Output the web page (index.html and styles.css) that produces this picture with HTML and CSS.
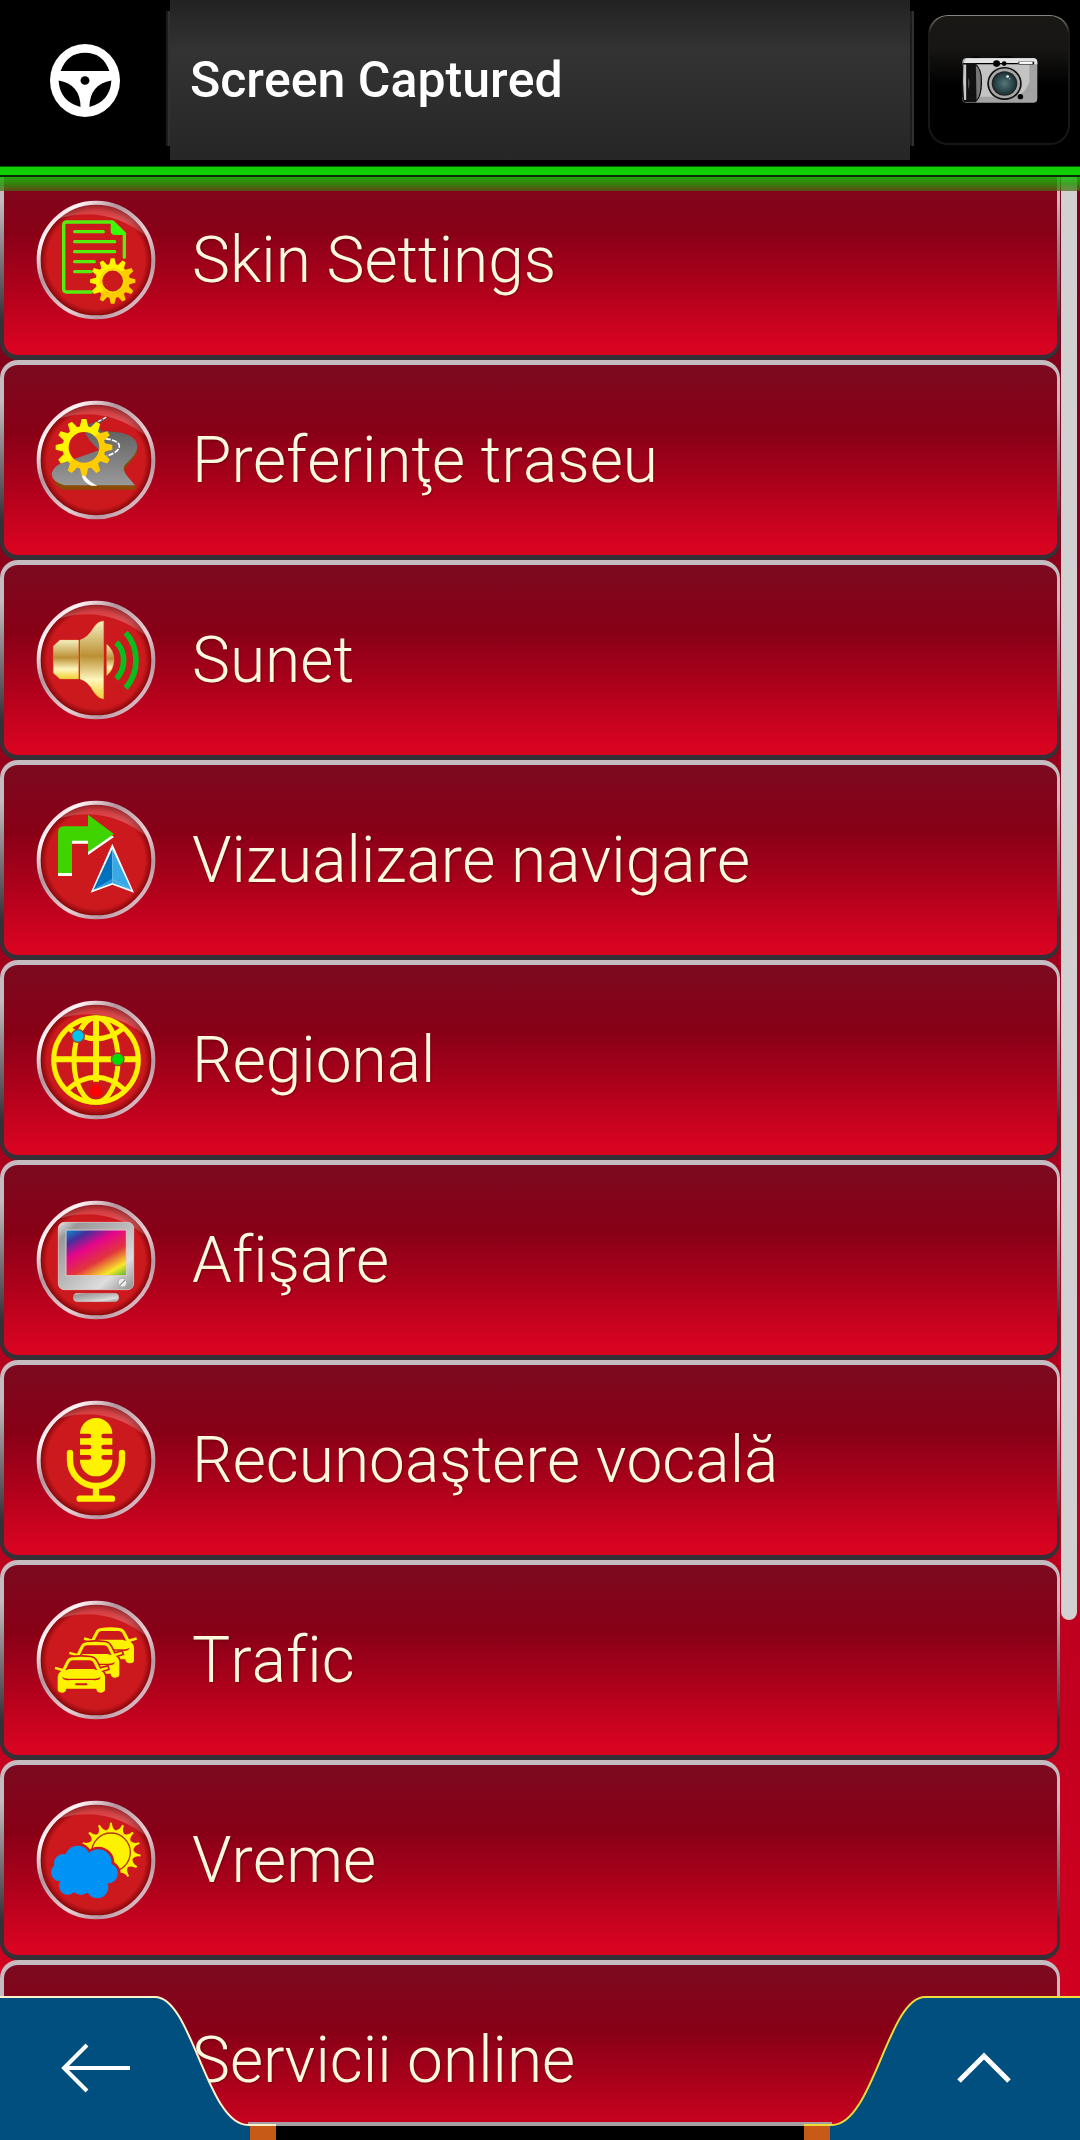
FILE: index.html
```html
<!DOCTYPE html>
<html lang="en">
<head>
<meta charset="utf-8">
<meta name="viewport" content="width=device-width, initial-scale=1">
<title>Screen Captured</title>
<link rel="stylesheet" href="styles.css">
</head>
<body>
<svg class="defs" aria-hidden="true">
  <defs>
    <linearGradient id="ring" x1="0" y1="0" x2="1" y2="1">
      <stop offset="0" stop-color="#c8a4ae"/><stop offset=".18" stop-color="#fff4f6"/><stop offset=".35" stop-color="#b4949e"/>
      <stop offset=".6" stop-color="#e8d0d6"/><stop offset=".76" stop-color="#b896a2"/><stop offset="1" stop-color="#fbe6ea"/>
    </linearGradient>
    <radialGradient id="dish">
      <stop offset=".86" stop-color="#cc191d"/><stop offset="1" stop-color="#7c0407"/>
    </radialGradient>
    <linearGradient id="gloss" x1="0" y1="0" x2="0" y2="1">
      <stop offset="0" stop-color="#fff" stop-opacity=".08"/><stop offset=".5" stop-color="#fff" stop-opacity=".24"/><stop offset="1" stop-color="#fff" stop-opacity=".14"/>
    </linearGradient>
    <linearGradient id="gold" x1="0" y1="0" x2="0" y2="1">
      <stop offset="0" stop-color="#f4efc0"/><stop offset=".45" stop-color="#bb9034"/><stop offset=".75" stop-color="#fff6bd"/><stop offset="1" stop-color="#f2cf32"/>
    </linearGradient>
    <linearGradient id="sunny" x1="0" y1="0" x2="1" y2="1">
      <stop offset=".48" stop-color="#fff500"/><stop offset=".52" stop-color="#ffcc00"/>
    </linearGradient>
    <linearGradient id="asphalt" x1="0" y1="0" x2="0" y2="1">
      <stop offset="0" stop-color="#555"/><stop offset="1" stop-color="#999"/>
    </linearGradient>
    <linearGradient id="silver" x1="0" y1="0" x2="1" y2="1">
      <stop offset="0" stop-color="#e6e6e6"/><stop offset=".14" stop-color="#999"/><stop offset=".5" stop-color="#bcbcbc"/><stop offset=".75" stop-color="#dedede"/><stop offset="1" stop-color="#8d8d8d"/>
    </linearGradient>
    <linearGradient id="spectrum" x1="0" y1="0" x2=".85" y2="1.15">
      <stop offset="0" stop-color="#0a8fd0"/><stop offset=".17" stop-color="#44309a"/><stop offset=".36" stop-color="#e5058b"/>
      <stop offset=".6" stop-color="#e2343c"/><stop offset=".82" stop-color="#f6ea2a"/><stop offset="1" stop-color="#35a83b"/>
    </linearGradient>
    <radialGradient id="lens"><stop offset="0" stop-color="#55777a"/><stop offset="1" stop-color="#1c3438"/></radialGradient>
    <path id="tooth" d="M-13 -60 L-7 -85 H7 L13 -60Z"/>
    <path id="ray" d="M-14 -66 Q-3 -72 -3 -89 H3 Q3 -72 14 -66Z"/>
    <mask id="gearMask" maskUnits="userSpaceOnUse" x="-90" y="-90" width="180" height="180">
      <circle r="55" fill="none" stroke="#fff" stroke-width="18"/>
      <g fill="#fff">
        <use href="#tooth"/><use href="#tooth" transform="rotate(30)"/><use href="#tooth" transform="rotate(60)"/><use href="#tooth" transform="rotate(90)"/>
        <use href="#tooth" transform="rotate(120)"/><use href="#tooth" transform="rotate(150)"/><use href="#tooth" transform="rotate(180)"/><use href="#tooth" transform="rotate(210)"/>
        <use href="#tooth" transform="rotate(240)"/><use href="#tooth" transform="rotate(270)"/><use href="#tooth" transform="rotate(300)"/><use href="#tooth" transform="rotate(330)"/>
      </g>
    </mask>
    <g id="gear"><rect x="-90" y="-90" width="180" height="180" fill="url(#sunny)" mask="url(#gearMask)"/></g>
    <g id="chip">
      <circle cx="180" cy="180" r="170" fill="url(#dish)"/>
      <path d="M60 58Q210 10 335 112A168 168 0 0 0 60 58Z" fill="url(#gloss)"/>
      <circle cx="180" cy="180" r="172" fill="none" stroke="url(#ring)" stroke-width="12"/>
    </g>
    <g id="car">
      <path fill="#fff200" stroke="#cc191d" stroke-width="10" paint-order="stroke" fill-rule="evenodd" d="M24 36L34 16Q40 3 52 2Q80-2 108 2Q119 3 126 16L136 36L158 30L160 37L140 43Q151 50 151 62V98Q151 108 139 108Q126 108 125 96H35Q34 108 21 108Q10 108 9 98V62Q9 50 20 43L0 37L2 30Z"/>
      <path fill="#cc191d" d="M32 41L44 17Q47 11 54 11H105Q112 11 116 17L128 41L116 37H44ZM22 61Q32 68 48 66H112Q128 68 138 61Q134 74 112 70H48Q28 74 22 61ZM62 80H98V86H62Z"/>
    </g>
    <g id="cloud">
      <circle cx="125" cy="175" r="38"/><circle cx="187" cy="188" r="40"/><circle cx="82" cy="190" r="28"/><circle cx="72" cy="217" r="27"/>
      <circle cx="216" cy="220" r="30"/><circle cx="95" cy="258" r="26"/><circle cx="135" cy="257" r="28"/><circle cx="184" cy="262" r="33"/><path d="M80 180H215V245L180 265H95Z"/>
    </g>
  </defs>
</svg>

<div class="app">
  <header class="topbar">
    <button class="drive" aria-label="Navigare">
      <svg class="wheel" viewBox="145 132 204 218" preserveAspectRatio="none">
        <ellipse cx="247" cy="241" rx="102" ry="109" fill="#fff"/>
        <path d="M176 213Q195 158 247 158Q300 158 318 213ZM170 241Q174 304 234 320Q233 252 170 241ZM324 241Q320 304 260 320Q261 252 324 241Z"/>
        <circle cx="247" cy="241" r="13"/>
      </svg>
    </button>
    <div class="titlebox"><h1 class="title">Screen Captured</h1></div>
    <div class="camcell">
      <button class="cambtn" aria-label="Captură">
        <svg class="camera" viewBox="1221 166 223 148" preserveAspectRatio="none">
          <rect x="1225" y="175" width="217" height="135" rx="12" fill="#a3a3a3"/>
          <path d="M1240 176H1432Q1442 178 1442 188V194H1228Q1230 178 1240 176Z" fill="#e4e4e4"/>
          <path d="M1268 194H1419V245Q1410 285 1370 292H1274Z" fill="#c4c4c4"/>
          <path d="M1250 175Q1262 166 1278 175ZM1320 174Q1348 163 1376 174ZM1236 190H1386V194H1236Z"/>
          <path d="M1226 190H1262Q1284 208 1282 250Q1282 292 1264 309H1230Q1222 300 1222 250Q1222 205 1226 190Z" fill="#111"/>
          <path d="M1228 195H1236V302H1230Q1225 250 1228 195Z" fill="#c8c8c8"/>
          <path d="M1264 197Q1280 212 1278 250Q1278 285 1266 303Z" fill="#777"/>
          <path d="M1242 235Q1249 252 1242 270Z" fill="#666"/>
          <circle cx="1324" cy="192" r="10"/><circle cx="1346" cy="192" r="7"/>
          <rect x="1387" y="186" width="46" height="9" fill="#222"/><rect x="1390" y="187" width="38" height="6" fill="#fff"/>
          <circle cx="1347" cy="252" r="50" fill="#111"/><circle cx="1347" cy="252" r="45" fill="#a8a8a8"/><circle cx="1347" cy="252" r="37" fill="#222"/>
          <circle cx="1347" cy="252" r="33" fill="url(#lens)"/><circle cx="1356" cy="231" r="4" fill="#fff"/><circle cx="1362" cy="238" r="2" fill="#ddd"/>
          <circle cx="1393" cy="292" r="8"/>
        </svg>
      </button>
    </div>
  </header>

  <main class="content">
    <ul class="menu">
      <li><a class="row" href="#skin">
        <svg class="icon" viewBox="0 0 360 360"><use href="#chip"/>
          <g fill="none" stroke="#55ef0c" stroke-width="10" stroke-linecap="round" stroke-linejoin="round">
            <path d="M166 276H92Q83 276 83 268V75Q83 66 93 66H230L265 100V172"/>
            <path d="M116 95H202M116 125H236M116 155H236M116 185H175M116 215H165"/></g>
          <path d="M224 64L269 105H238Q224 105 224 92Z" fill="#32ff08"/>
          <g transform="translate(230 243) scale(.8)"><use href="#gear"/><circle r="43" fill="none" stroke="#ffe100" stroke-width="8"/></g>
        </svg><span class="label">Skin Settings</span></a></li>
      <li><a class="row" href="#traseu">
        <svg class="icon" viewBox="0 0 360 360"><use href="#chip"/>
          <path fill="#8b4a05" d="M47 222L60 255L80 269H299V257Q262 222 266 208L304 160V138L220 100L155 110L190 150L120 190Z"/>
          <path fill="#444" d="M160 74L220 47L185 75L196 94L160 100Z"/>
          <path fill="url(#asphalt)" d="M155 74L216 51L185 75L196 94Q300 93 304 138Q305 160 272 190Q250 205 282 238L297 256H85Q48 245 47 222Q52 192 100 182L190 150Q150 115 148 96Z"/>
          <path fill="none" stroke="#fff" stroke-width="4" stroke-dasharray="12 4" d="M186 65L214 50"/>
          <path fill="none" stroke="#fff" stroke-width="5" stroke-dasharray="16 4" d="M208 116Q252 122 250 140Q248 156 212 168"/>
          <path fill="#fff" d="M137 225H146Q155 243 184 257H166Q140 246 137 225Z"/>
          <g transform="translate(144 142)"><use href="#gear"/></g>
        </svg><span class="label">Preferinţe traseu</span></a></li>
      <li><a class="row" href="#sunet">
        <svg class="icon" viewBox="0 0 360 360"><use href="#chip"/>
          <g fill="url(#gold)" stroke="#e8b050" stroke-width="1">
            <path d="M72 120H128V237H72L52 219V138Z"/>
            <path d="M132 120Q156 112 172 84Q185 63 203 63V297Q185 295 172 274Q156 244 132 237Z"/>
            <path d="M212 133Q234 150 234 180Q234 208 212 227Z"/></g>
          <path fill="none" stroke="#08bd1e" stroke-width="17" d="M241 127Q263 148 263 181Q263 214 241 236M269 98Q300 132 300 181Q300 230 269 264"/>
        </svg><span class="label">Sunet</span></a></li>
      <li><a class="row" href="#navigare">
        <svg class="icon" viewBox="0 0 360 360"><use href="#chip"/>
          <path transform="translate(0 9)" fill="#fff" d="M66 219V97Q66 79 84 79H156V44L234 102L156 156V122H108V219Z"/>
          <path fill="#3fd400" d="M66 219V97Q66 79 84 79H156V44L234 102L156 156V122H108V219Z"/>
          <path fill="#fff" d="M229 131L294 278L229 254L164 278Z"/>
          <path fill="#0071bd" d="M229 147V238L172 270Z"/><path fill="#38a9e4" d="M229 147V238L286 270Z"/>
          <path fill="#2a98dc" d="M229 236V249L172 270Z"/><path fill="#38a9e4" d="M229 238L286 270L229 249Z"/>
        </svg><span class="label">Vizualizare navigare</span></a></li>
      <li><a class="row" href="#regional">
        <svg class="icon" viewBox="0 0 360 360"><use href="#chip"/>
          <g fill="none" stroke="#fff200" stroke-width="15">
            <circle cx="180" cy="180" r="127"/><ellipse cx="180" cy="180" rx="66" ry="127"/>
            <path d="M180 52V245M52 178H308" stroke-width="18"/><path d="M97 84Q135 116 180 116Q225 116 263 84M93 270Q135 232 180 232Q225 232 267 270"/></g>
          <circle cx="126" cy="108" r="19" fill="#00c4ea" stroke="#a33b32" stroke-width="4"/>
          <circle cx="245" cy="178" r="19" fill="#00dc00" stroke="#a33b32" stroke-width="4"/>
          <circle cx="180" cy="272" r="18" fill="#f00"/>
        </svg><span class="label">Regional</span></a></li>
      <li><a class="row" href="#afisare">
        <svg class="icon" viewBox="0 0 360 360"><use href="#chip"/>
          <rect x="67" y="67" width="226" height="202" rx="18" fill="url(#silver)" stroke="#ddd" stroke-width="2"/>
          <rect x="90" y="90" width="181" height="137" fill="url(#spectrum)" stroke="#e4c8cc" stroke-width="3"/>
          <circle cx="259" cy="248" r="13" fill="#eee" stroke="#999" stroke-width="2"/><path d="M251 257L267 240" stroke="#999" stroke-width="4"/>
          <rect x="112" y="280" width="136" height="25" rx="12" fill="url(#silver)" stroke="#ccc"/>
        </svg><span class="label">Afişare</span></a></li>
      <li><a class="row" href="#voce">
        <svg class="icon" viewBox="0 0 360 360"><use href="#chip"/>
          <rect x="132" y="54" width="97" height="175" rx="48" fill="#fff200"/>
          <path fill="none" stroke="#cc191d" stroke-width="14" stroke-linecap="round" d="M125 108H159M203 108H236M125 141H159M203 141H236M125 172H159M203 172H236"/>
          <path fill="none" stroke="#fff200" stroke-width="19" stroke-linecap="round" d="M102 159V180A78 78 0 0 0 258 180V159M180 260V294M131 296H228"/>
        </svg><span class="label">Recunoaştere vocală</span></a></li>
      <li><a class="row" href="#trafic">
        <svg class="icon" viewBox="0 0 360 360"><use href="#chip"/>
          <use href="#car" x="143" y="82"/><use href="#car" x="99" y="125"/><use href="#car" x="56" y="170"/>
        </svg><span class="label">Trafic</span></a></li>
      <li><a class="row" href="#vreme">
        <svg class="icon" viewBox="0 0 360 360"><use href="#chip"/>
          <g transform="translate(225 157)" fill="#fff200">
            <circle r="68"/>
            <use href="#ray"/><use href="#ray" transform="rotate(24)"/><use href="#ray" transform="rotate(48)"/><use href="#ray" transform="rotate(72)"/><use href="#ray" transform="rotate(96)"/>
            <use href="#ray" transform="rotate(120)"/><use href="#ray" transform="rotate(144)"/><use href="#ray" transform="rotate(288)"/><use href="#ray" transform="rotate(312)"/><use href="#ray" transform="rotate(336)"/>
            <circle r="58" fill="none" stroke="#b5371c" stroke-width="4"/>
          </g>
          <use href="#cloud" fill="#cc191d" stroke="#cc191d" stroke-width="16"/><use href="#cloud" fill="#0092f5"/>
        </svg><span class="label">Vreme</span></a></li>
      <li><a class="row" href="#online">
        <svg class="icon" viewBox="0 0 360 360"><use href="#chip"/></svg><span class="label">Servicii online</span></a></li>
    </ul>
    <div class="track"><div class="thumb"></div></div>
  </main>

  <footer class="bottombar">
    <button class="tab" aria-label="Înapoi">
      <svg viewBox="0 0 276 144">
        <path fill="#004f7e" d="M0 1H155C192 1 207 129 248 129H250V144H0Z"/>
        <path fill="#c85a17" d="M250 129H276V144H250Z"/>
        <path fill="none" stroke="#fff3cc" stroke-width="2" d="M0 1H155C192 1 207 129 248 129H276"/>
        <path fill="none" stroke="#fff" stroke-width="4" d="M130 72H65M87 49L64 72L87 95"/>
      </svg>
    </button>
    <div class="strip"></div>
    <button class="tab" aria-label="Sus">
      <svg viewBox="0 0 276 144">
        <path fill="#004f7e" d="M276 1H121C84 1 69 129 28 129H26V144H276Z"/>
        <path fill="#c85a17" d="M0 129H26V144H0Z"/>
        <path fill="none" stroke="#efdc3c" stroke-width="2" d="M276 1H121C84 1 69 129 28 129H0"/>
        <path fill="none" stroke="#fff" stroke-width="5" d="M155 85L180 60L205 85"/>
      </svg>
    </button>
  </footer>
</div>
</body>
</html>
```
FILE: styles.css
```css
* { box-sizing: border-box; }

body {
  margin: 0;
  background: #000;
  font-family: Roboto, "Liberation Sans", sans-serif;
  font-kerning: none;
  font-variant-ligatures: none;
}

button {
  padding: 0;
  border: 0;
  background: none;
  cursor: pointer;
}

svg { display: block; }

.defs {
  position: absolute;
  width: 0;
  height: 0;
}

.app {
  position: relative;
  display: flex;
  flex-direction: column;
  height: 100vh;
  overflow: hidden;
}

/* Top bar */
.topbar {
  position: relative;
  z-index: 1;
  flex: none;
  display: grid;
  grid-template-columns: 170px 1fr 170px;
  height: 177px;
  padding-bottom: 17px;
  background: linear-gradient(#000 166px, #085c06 166px, #085c06 167px, #10d004 167px, #10d004 175px, #052c04 175px);
}

.topbar::after {
  content: "";
  position: absolute;
  top: 100%;
  left: 0;
  right: 0;
  height: 14px;
  background: linear-gradient(rgba(20, 190, 10, .85), rgba(40, 150, 10, .85) 50%, rgba(80, 100, 20, .7));
}

.drive {
  display: flex;
  align-items: center;
  justify-content: center;
}

.wheel {
  width: 70px;
  height: 73px;
}

.titlebox {
  position: relative;
  display: flex;
  align-items: center;
  padding: 0 20px;
  background: linear-gradient(#222, #333 32%, #262626);
}

.titlebox::before,
.titlebox::after {
  content: "";
  position: absolute;
  top: 11px;
  bottom: 14px;
  width: 4px;
  background: linear-gradient(90deg, #1c1c1c 50%, #303030 50%);
}

.titlebox::before { right: 100%; }
.titlebox::after { left: 100%; }

.title {
  margin: 0;
  color: #fff;
  font-size: 50px;
  font-weight: 500;
  line-height: 60px;
}

.camcell {
  display: flex;
  align-items: center;
  justify-content: flex-end;
  padding-right: 10px;
}

.cambtn {
  display: flex;
  align-items: center;
  justify-content: center;
  width: 142px;
  height: 130px;
  border: 2px solid transparent;
  border-top-width: 1px;
  border-radius: 20px;
  background:
    linear-gradient(#191815, #171614 25%, #000 55%) padding-box,
    linear-gradient(#8a8782, #1a1a1a 14%, #161616) border-box;
}

.camera {
  width: 77px;
  height: 49px;
}

/* Settings list */
.content {
  flex: 1;
  display: flex;
  min-height: 0;
  overflow: hidden;
  background: linear-gradient(#78001a, #d80020);
}

.menu {
  flex: 1;
  margin: -17px 0 0;
  padding: 0;
  list-style: none;
}

.row {
  display: flex;
  align-items: center;
  gap: 36px;
  height: 200px;
  padding-left: 32px;
  border: 5px solid transparent;
  border-left-width: 4px;
  border-right-width: 3px;
  border-radius: 18px;
  background:
    linear-gradient(#7c0a20, #880016 35%, #d80321 96%) padding-box,
    linear-gradient(#c4bcc0 20%, #343036 80%) border-box;
  color: #fcf9df;
  text-decoration: none;
}

.icon {
  flex: none;
  width: 120px;
  height: 120px;
}

.label {
  padding-top: 2px;
  font-size: 64px;
  font-weight: 300;
  line-height: 76px;
  text-shadow: 1px 1px 2px rgba(60, 0, 0, .4);
}

.track {
  flex: none;
  width: 20px;
  padding: 0 3px 0 1px;
}

.thumb {
  height: 73.5%;
  border-radius: 0 0 8px 8px;
  background: #d2d0d1;
}

/* Bottom bar */
.bottombar {
  position: absolute;
  left: 0;
  right: 0;
  bottom: 0;
  display: flex;
  align-items: flex-end;
  pointer-events: none;
}

.tab {
  position: relative;
  flex: none;
  width: 276px;
  pointer-events: auto;
}

.strip {
  flex: 1;
  height: 18px;
  margin: 0 -28px;
  border-top: 4px solid #a5a1a3;
  background: #000;
}
```
